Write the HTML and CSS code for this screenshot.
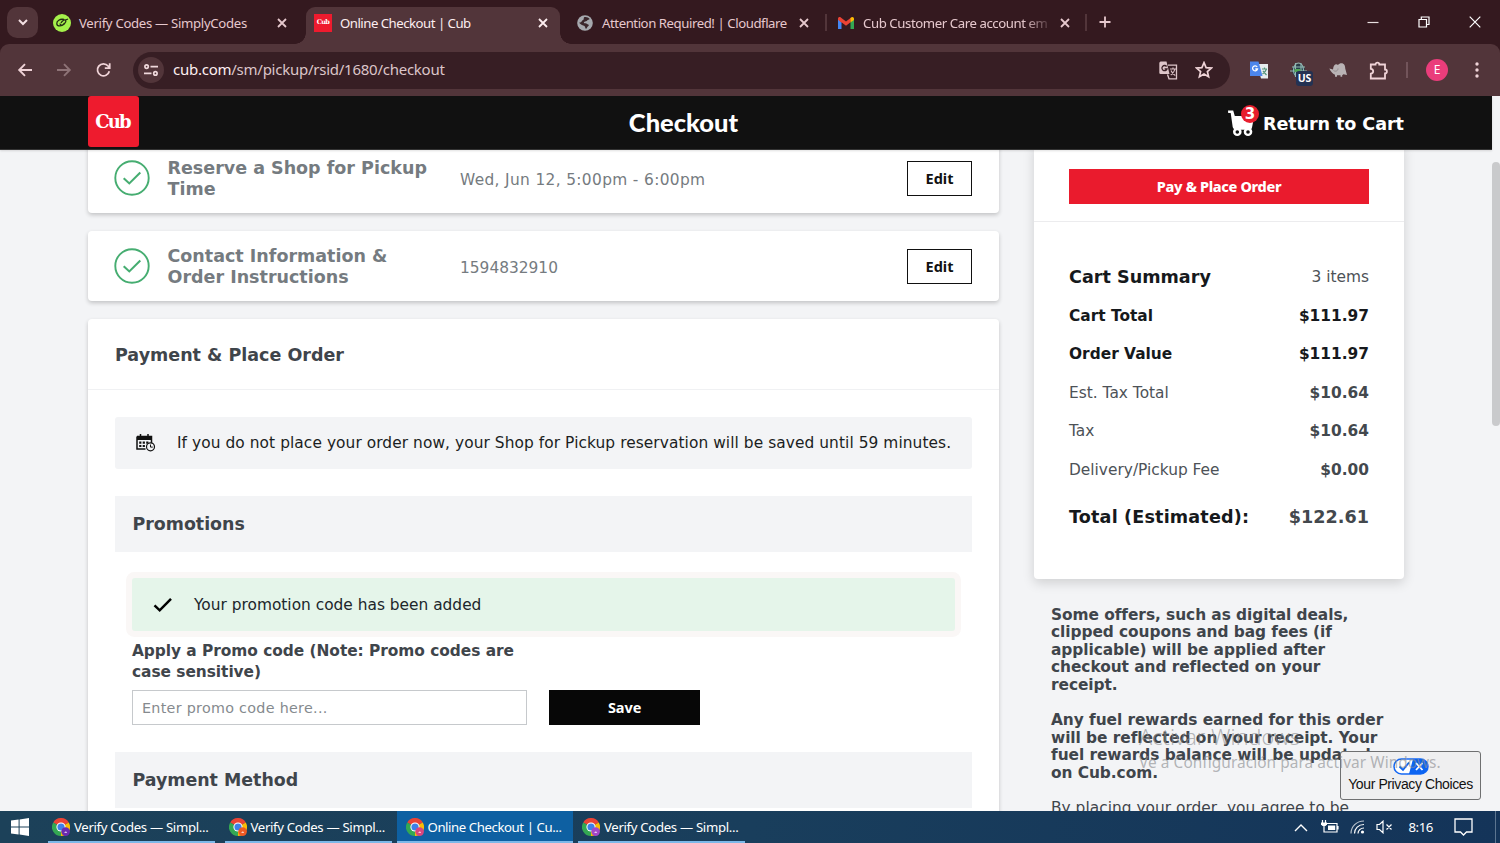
FILE: index.html
```html
<!DOCTYPE html>
<html lang="en">
<head>
    <meta charset="UTF-8">
    <meta name="viewport" content="width=device-width, initial-scale=1.0">
    <title>Online Checkout | Cub</title>
    <link rel="stylesheet" href="styles.css">
</head>
<body>
    <!-- shared icons -->
    <svg class="defs" width="0" height="0">
        <symbol id="close" viewBox="0 0 12 12"><path d="M2 2l8 8M10 2l-8 8" fill="none" stroke="currentColor" stroke-width="1.8"/></symbol>
        <symbol id="check-circle" viewBox="0 0 36 36">
            <circle cx="18" cy="18" r="16.7" fill="none" stroke="#46ad71" stroke-width="1.9"/>
            <path d="M9.7 18.2l5.6 5.2 11-10.8" fill="none" stroke="#46ad71" stroke-width="2.1"/>
        </symbol>
        <symbol id="chrome" viewBox="0 0 18 18">
            <path d="M9 9L1.2 4.5A9 9 0 0 1 16.8 4.5z" fill="#ea4335"/>
            <path d="M9 9l7.8-4.5A9 9 0 0 1 9 18z" fill="#fbbc05"/>
            <path d="M9 9v9A9 9 0 0 1 1.2 4.5z" fill="#34a853"/>
            <circle cx="9" cy="9" r="4.6" fill="#fff"/>
            <circle cx="9" cy="9" r="3.6" fill="#3f7fe8"/>
            <circle cx="13.6" cy="13.6" r="4.3" fill="currentColor"/>
            <path d="M12.4 15c0-2 2.6-2 2.6 0z" fill="#fff" opacity=".7"/>
        </symbol>
    </svg>

    <div class="tabstrip">
        <button class="tab-search"><svg width="12" height="12" viewBox="0 0 12 12"><path d="M2 4l4 4 4-4" fill="none" stroke="#f3dfe2" stroke-width="2"/></svg></button>
        <div class="tab tab-codes">
            <svg class="favicon" width="18" height="18" viewBox="0 0 18 18"><circle cx="9" cy="9" r="9" fill="#a5f14b"/><path d="M11 5.500C7 4.500 3.500 7 3.800 9.800c.4 3 5.500 3 7.700-.8M7 9.500c0 2.500 4 2 5.500-1.200.5-1.200.5-2-.3-2.300-1.300-.3-3.500 1.300-4.200 3M12.500 6l2.500-1" fill="none" stroke="#232c14" stroke-width="1.300"/></svg>
            <span class="tab-title">Verify Codes — SimplyCodes</span>
            <svg class="tab-close" width="12" height="12"><use href="#close"/></svg>
        </div>
        <div class="tab tab-cub active">
            <span class="favicon cub-favicon">Cub</span>
            <span class="tab-title">Online Checkout | Cub</span>
            <svg class="tab-close" width="12" height="12"><use href="#close"/></svg>
        </div>
        <div class="tab tab-cloudflare">
            <svg class="favicon" width="16" height="16" viewBox="0 0 16 16"><circle cx="8" cy="8" r="7.800" fill="#a6a9ae"/><path d="M7 2.200c2.500-.7 4.500.3 5.700 1.800-.8 1-2 .4-2.500 1.500-.6 1.200-1.800.7-2.700 1.200C6.200 7.500 7 8.300 8.500 8.200c1.300 0 1.500 1 2.800 1.200.9.300.5 1.600-.5 2-.8.500-.8 2.400-1.900 2.300-1-.2-.3-2-1.500-2.700-1.300-.7-3.400-1-5.600-3.500C3.200 8 4.500 7 5 6c.4-1 2-1 1.700-2.200z" fill="#3b272c"/></svg>
            <span class="tab-title">Attention Required! | Cloudflare</span>
            <svg class="tab-close" width="12" height="12"><use href="#close"/></svg>
        </div>
        <div class="tab tab-gmail">
            <svg class="favicon" width="16" height="12" viewBox="0 0 16 12"><path d="M0 2v10h3.500V5z" fill="#4285f4"/><path d="M16 2v10h-3.500V5z" fill="#34a853"/><path d="M0 1.800C0 .2 1.700-.4 2.800.5L8 4.500 13.200.5 12.500 5.300 8 8.700 3.500 5.300v.5L0 2.800z" fill="#ea4335"/><path d="M12.500 1l1-.7C14.700-.4 16 .5 16 1.800v1.200l-3.500 2.500z" fill="#fbbc04"/></svg>
            <span class="tab-title faded">Cub Customer Care account em</span>
            <svg class="tab-close" width="12" height="12"><use href="#close"/></svg>
        </div>
        <svg class="new-tab" width="12" height="12" viewBox="0 0 12 12"><path d="M6 .5v11M.5 6h11" stroke="#e6c8cd" stroke-width="1.800"/></svg>
        <div class="window-controls">
            <svg width="12" height="12" viewBox="0 0 12 12"><path d="M.5 6.500h11" stroke="#e9dfe0" stroke-width="1.200"/></svg>
            <svg width="12" height="12" viewBox="0 0 12 12"><path d="M1 3.500h7.500V11H1zM3.300 3.500V1H11v7.500H8.500" fill="none" stroke="#fff" stroke-width="1.200"/></svg>
            <svg width="12" height="12" viewBox="0 0 12 12"><path d="M.7.700l10.600 10.600M11.300.7L.7 11.300" stroke="#fff" stroke-width="1.200"/></svg>
        </div>
    </div>

    <div class="toolbar">
        <svg class="nav-icon" width="16" height="16" viewBox="0 0 16 16"><path d="M15 8H2.500M8 2.200L2.200 8 8 13.800" fill="none" stroke="#efd3d7" stroke-width="1.900"/></svg>
        <svg class="nav-icon" width="16" height="16" viewBox="0 0 16 16"><path d="M1 8h12.500M8 2.200L13.800 8 8 13.800" fill="none" stroke="#8e7377" stroke-width="1.900"/></svg>
        <svg class="nav-icon" width="16" height="16" viewBox="0 0 16 16"><path d="M14.300 9.200A6 6 0 1 1 13.100 4l1.400 1.600M14.700 1.200v4.900H9.800" fill="none" stroke="#efd3d7" stroke-width="1.800"/></svg>
        <div class="omnibox">
            <span class="site-info"><svg width="14" height="12" viewBox="0 0 14 12"><g fill="none" stroke="#efd9dc" stroke-width="1.700"><circle cx="2.600" cy="2.600" r="1.700"/><path d="M6.500 2.600H14M0 9.400h7.500"/><circle cx="11.400" cy="9.400" r="1.700"/></g></svg></span>
            <span class="url"><span class="domain">cub.com</span>/sm/pickup/rsid/1680/checkout</span>
            <svg class="translate" width="19" height="19" viewBox="0 0 19 19"><path d="M1.500.5h6l3 12.500h-9A1.300 1.300 0 0 1 .3 12V1.700z" fill="#ddc5c9"/><path d="M9 4.200h8.500v13.600H10L8.500 13.500" fill="none" stroke="#ddc5c9" stroke-width="1.300"/><path d="M11 8h6M14 6.500V8M16 8c-.7 3-2.200 4.500-4.200 6M12 9.500c1 2.500 2.500 4 4.300 5" fill="none" stroke="#ddc5c9" stroke-width="1.100"/><path d="M7.600 5.500A2.600 2.600 0 1 0 8 8H5.600" fill="none" stroke="#371e24" stroke-width="1.300"/></svg>
            <svg class="star" width="18" height="18" viewBox="0 0 18 18"><path d="M9 1.700l2.100 5 5.300.4-4 3.500 1.200 5.200L9 13l-4.600 2.800 1.200-5.200-4-3.500 5.300-.4z" fill="none" stroke="#efd3d7" stroke-width="1.700"/></svg>
        </div>
        <div class="extensions">
            <svg width="18" height="18" viewBox="0 0 18 18"><path d="M7 3h11v14.500h-7z" fill="#e6ecee"/><path d="M12 8h5M14.500 6.500v2M16.500 8c-1 3-2.500 4-4 5M13 10l3.500 4" fill="none" stroke="#55957c" stroke-width="1.200"/><path d="M0 .5h8.500L12.500 15H0z" fill="#4c86ec"/><path d="M7.200 6A2.500 2.500 0 1 0 7.500 8H5.300" fill="none" stroke="#fff" stroke-width="1.300"/></svg>
            <span class="globe">
                <svg width="17" height="17" viewBox="0 0 17 17"><circle cx="8.500" cy="8.500" r="6.500" fill="#263e4a"/><g fill="none" stroke="#91b7b2" stroke-width="1.100"><path d="M2 5h13M0 9h17M5.500 1v14M11 1v14"/><ellipse cx="8.500" cy="8" rx="5" ry="7"/></g><path d="M4.500 7h6v3h-6z" fill="#51a657"/></svg>
                <span class="globe-badge">US</span>
            </span>
            <svg width="18" height="16" viewBox="0 0 18 16"><path d="M.3 6.500L4 7.500C4.500 2.500 7 1.500 9 3c1.500-2 5-2.500 6.500 0 .8 1.500.5 3 1 4.500L18 13l-3.500-.8-1.300 1v1.600h-1.700v-1.500H8v1.500H6v-2C3.500 11.500 1.500 9.500.3 6.500z" fill="#b9b3b5"/><path d="M4.500 8.500c2 1.500 4.500.5 4.500-2" fill="none" stroke="#958d8f"/></svg>
            <svg width="19" height="19" viewBox="0 0 19 19"><path d="M1.800 3.500h4.700a1.900 1.900 0 0 1 3.800 0H16v5a1.900 1.900 0 0 1 0 3.800v5.200H1.800v-4.800c3.200-.3 3.200-4.600 0-4.900z" fill="none" stroke="#efd3d7" stroke-width="1.800"/></svg>
        </div>
        <span class="divider"></span>
        <span class="avatar">E</span>
        <svg class="menu-dots" width="4" height="16" viewBox="0 0 4 16"><g fill="#efd3d7"><circle cx="2" cy="2" r="1.700"/><circle cx="2" cy="8" r="1.700"/><circle cx="2" cy="14" r="1.700"/></g></svg>
    </div>

    <div class="viewport">
        <div class="page">
            <header class="site-header">
                <div class="logo">Cub</div>
                <h1>Checkout</h1>
                <a class="return-cart">
                    <span class="cart-icon">
                        <svg width="27" height="27" viewBox="0 0 27 27"><path d="M0 .5h5.200l1.600 5.500H26.300L24 17.500c-.3 1.200-.8 2-1.500 2.300H8.300C6.500 19.800 5 18.500 4.700 17L2.700 3H.2z" fill="#fff"/><circle cx="9.300" cy="21.700" r="4.300" fill="#fff"/><circle cx="20" cy="21.700" r="4.300" fill="#fff"/><circle cx="9.300" cy="22" r="1.800" fill="#111"/><circle cx="20" cy="22" r="1.800" fill="#111"/></svg>
                        <span class="cart-count">3</span>
                    </span>
                    <span class="return-label">Return to Cart</span>
                </a>
            </header>

            <div class="content">
                <main class="steps">
                    <section class="card step">
                        <svg width="36" height="36"><use href="#check-circle"/></svg>
                        <h2>Reserve a Shop for Pickup<br>Time</h2>
                        <span class="step-value step-date">Wed, Jun 12, 5:00pm - 6:00pm</span>
                        <button class="edit-btn">Edit</button>
                    </section>
                    <section class="card step">
                        <svg width="36" height="36"><use href="#check-circle"/></svg>
                        <h2>Contact Information &amp;<br>Order Instructions</h2>
                        <span class="step-value">1594832910</span>
                        <button class="edit-btn">Edit</button>
                    </section>
                    <section class="card payment">
                        <h2 class="payment-title">Payment &amp; Place Order</h2>
                        <div class="payment-body">
                            <div class="notice">
                                <svg width="20" height="18" viewBox="0 0 20 18"><path d="M1 2.500h14.500v7M1 2.500V15h8.500M4.500 0v4M12 0v4" fill="none" stroke="#111" stroke-width="1.500"/><path d="M1 3h14.500v3H1z" fill="#111"/><path d="M3.200 8.700h9.500M3.200 12h6" stroke="#111" stroke-width="2.200" stroke-dasharray="2.200 1.300"/><circle cx="14.500" cy="12.800" r="4" fill="#f3f4f6" stroke="#111" stroke-width="1.200"/><path d="M14.500 10.500v2.600h2.300" fill="none" stroke="#111"/></svg>
                                <span>If you do not place your order now, your Shop for Pickup reservation will be saved until 59 minutes.</span>
                            </div>
                            <h3 class="section-title">Promotions</h3>
                            <div class="promo">
                                <div class="success">
                                    <svg width="20" height="16" viewBox="0 0 20 16"><path d="M1.500 8.300l5.200 5L18 1.800" fill="none" stroke="#000" stroke-width="2.500"/></svg>
                                    <span>Your promotion code has been added</span>
                                </div>
                                <label class="promo-label" for="promo">Apply a Promo code (Note: Promo codes are<br>case sensitive)</label>
                                <div class="promo-form">
                                    <input id="promo" type="text" placeholder="Enter promo code here...">
                                    <button class="save-btn">Save</button>
                                </div>
                            </div>
                            <h3 class="section-title">Payment Method</h3>
                        </div>
                    </section>
                </main>

                <aside class="sidebar">
                    <div class="card summary">
                        <div class="pay-wrap"><button class="pay-btn">Pay &amp; Place Order</button></div>
                        <div class="summary-rows">
                            <div class="row heading"><span>Cart Summary</span><span class="items">3 items</span></div>
                            <div class="row strong"><span>Cart Total</span><b>$111.97</b></div>
                            <div class="row strong"><span>Order Value</span><b>$111.97</b></div>
                            <div class="row"><span>Est. Tax Total</span><b>$10.64</b></div>
                            <div class="row"><span>Tax</span><b>$10.64</b></div>
                            <div class="row"><span>Delivery/Pickup Fee</span><b>$0.00</b></div>
                            <div class="row total"><span>Total (Estimated):</span><b>$122.61</b></div>
                        </div>
                    </div>
                    <div class="disclaimer">
                        <p class="bold">Some offers, such as digital deals,<br>clipped coupons and bag fees (if<br>applicable) will be applied after<br>checkout and reflected on your<br>receipt.</p>
                        <p class="bold">Any fuel rewards earned for this order<br>will be reflected on your receipt. Your<br>fuel rewards balance will be updated<br>on Cub.com.</p>
                        <p class="agreement">By placing your order, you agree to be</p>
                    </div>
                </aside>
            </div>
        </div>
        <div class="scrollbar"><div class="thumb"></div></div>

        <button class="privacy">
            <svg width="36" height="17" viewBox="0 0 36 17"><rect x="1" y="1" width="34" height="15" rx="7.500" fill="#fff" stroke="#1668f3" stroke-width="1.500"/><path d="M20 1h7.500a7.500 7.500 0 0 1 0 15H16z" fill="#0c64f2"/><path d="M6.500 8.500l3.500 3.500 6-7.500" fill="none" stroke="#0c64f2" stroke-width="1.800"/><path d="M23 5l6.500 7M29.500 5L23 12" stroke="#fff" stroke-width="1.800"/></svg>
            <span>Your Privacy Choices</span>
        </button>
        <div class="watermark">
            <div class="watermark-title">Activar Windows</div>
            <div class="watermark-text">Ve a Configuración para activar Windows.</div>
        </div>
    </div>

    <div class="taskbar">
        <svg class="start" width="18" height="18" viewBox="0 0 18 18"><path d="M0 2.600L7.600 1.500v7H0zM8.600 1.400L18 0v8.500H8.600zM0 9.500h7.600v7L0 15.400zM8.600 9.500H18V18l-9.400-1.400z" fill="#fff"/></svg>
        <div class="tasks">
            <div class="task"><svg class="violet" width="18" height="18"><use href="#chrome"/></svg><span>Verify Codes — Simpl...</span></div>
            <div class="task"><svg class="orange" width="18" height="18"><use href="#chrome"/></svg><span>Verify Codes — Simpl...</span></div>
            <div class="task current"><svg class="pink" width="18" height="18"><use href="#chrome"/></svg><span>Online Checkout | Cu...</span></div>
            <div class="task"><svg class="purple" width="18" height="18"><use href="#chrome"/></svg><span>Verify Codes — Simpl...</span></div>
        </div>
        <div class="tray">
            <svg width="14" height="9" viewBox="0 0 14 9"><path d="M1 8l6-6 6 6" fill="none" stroke="#fff" stroke-width="1.400"/></svg>
            <svg width="18" height="14" viewBox="0 0 18 14"><path d="M5 3.500h11v8.500H5M17 6v3.500" fill="none" stroke="#fff" stroke-width="1.200"/><path d="M7 5.500h7.200V10H7z" fill="#fff"/><path d="M1.500 0v3M4.500 0v3M3 5v7H5" fill="none" stroke="#fff" stroke-width="1.200"/><path d="M0 2.500h6V4.500L4.500 6h-3L0 4.500z" fill="#fff"/></svg>
            <svg width="15" height="14" viewBox="0 0 15 14"><g fill="none" stroke="#fff" stroke-width="1.200"><path d="M1 13.500C1 6.500 6.500 1 14 1" opacity=".7"/><path d="M4.500 13.500C4.500 8.500 8.500 4.500 14 4.500M8 13.500C8 10.500 10.500 8 14 8"/></g><circle cx="12.500" cy="12" r="1.600" fill="#fff"/></svg>
            <svg width="17" height="14" viewBox="0 0 17 14"><path d="M1 4.500h2.500L7 1.200v11.600L3.500 9.500H1zM10.500 4.500l5 5M15.500 4.500l-5 5" fill="none" stroke="#fff" stroke-width="1.200"/></svg>
            <span class="clock">8:16</span>
            <svg width="19" height="18" viewBox="0 0 19 18"><path d="M1 1h17v13h-5.500L9.500 17l-3-3H1z" fill="none" stroke="#fff" stroke-width="1.300"/></svg>
        </div>
    </div>
</body>
</html>
```
FILE: styles.css
```css
* {
    box-sizing: border-box;
}

body {
    margin: 0;
    width: 1500px;
    height: 843px;
    overflow: hidden;
    display: flex;
    flex-direction: column;
    font-family: Verdana, "DejaVu Sans", sans-serif;
    font-size: 15.4px;
    color: #3f454b;
    background: #34191f;
}

h1, h2, h3, p {
    margin: 0;
}

button {
    padding: 0 0 1px;
    border: none;
    font-family: "Noto Sans", sans-serif;
}

svg {
    flex: none;
    display: block;
}

span, b, label {
    white-space: nowrap;
}

.defs {
    position: absolute;
}

/* browser tabs */
.tabstrip {
    flex: none;
    height: 44px;
    display: flex;
    align-items: center;
    color: #e6c8cd;
    font-family: "Noto Sans", sans-serif;
    font-size: 13.2px;
}

.tab-search {
    width: 31px;
    height: 31px;
    margin-left: 7px;
    padding: 0;
    border-radius: 10px;
    background: #52353a;
    display: flex;
    align-items: center;
    justify-content: center;
}

.tab {
    height: 37px;
    margin-top: 7px;
    padding-bottom: 6px;
    display: flex;
    align-items: center;
    position: relative;
}

.tab-title {
    flex: 1;
    margin-left: 8px;
    letter-spacing: -0.4px;
}

.tab-codes { width: 268px; padding-left: 15px; padding-right: 18px; }
.tab-codes .tab-title { letter-spacing: -0.32px; }
.tab-cub { width: 254px; padding-left: 8px; padding-right: 11px; }
.tab-cub .tab-title { letter-spacing: -0.5px; }
.tab-cloudflare { width: 266px; padding-left: 17px; padding-right: 16px; }
.tab-cloudflare .tab-title { margin-left: 9px; letter-spacing: -0.44px; }
.tab-gmail { width: 261px; padding-left: 12px; padding-right: 16px; }
.tab-gmail .tab-title { margin-left: 9px; letter-spacing: -0.42px; }

.tab.active {
    background: #52353a;
    color: #fdeef0;
    border-radius: 9px 9px 0 0;
}

/* flared feet of the selected tab */
.tab.active::before,
.tab.active::after {
    content: "";
    position: absolute;
    bottom: 0;
    width: 11px;
    height: 11px;
}

.tab.active::before {
    left: -11px;
    background: radial-gradient(circle at 0 0, transparent 10.5px, #52353a 11px);
}

.tab.active::after {
    right: -11px;
    background: radial-gradient(circle at 100% 0, transparent 10.5px, #52353a 11px);
}

.tab-gmail::before,
.tab-gmail::after {
    content: "";
    position: absolute;
    top: 7px;
    width: 2px;
    height: 17px;
    background: #52353a;
}

.tab-gmail::before { left: -1px; }
.tab-gmail::after { right: 0; }

.faded {
    margin-right: 10px;
    mask-image: linear-gradient(90deg, #000 86%, rgba(0,0,0,0.15));
}

.cub-favicon {
    width: 18px;
    height: 18px;
    background: #ee1b2e;
    color: #fff;
    font: bold 6.5px/17px "DejaVu Serif", serif;
    letter-spacing: -0.6px;
    text-align: center;
}

.new-tab {
    margin-left: 12px;
}

.window-controls {
    display: flex;
    gap: 39px;
    margin-left: auto;
    margin-right: 19px;
}

/* browser toolbar */
.toolbar {
    flex: none;
    height: 52px;
    display: flex;
    align-items: center;
    padding-left: 17px;
    background: #52353a;
    border-radius: 9px 9px 0 0;
    font-family: "Noto Sans", sans-serif;
}

.nav-icon {
    margin-right: 23px;
}

.omnibox {
    width: 1097px;
    height: 37px;
    margin-left: -1px;
    padding: 0 17px 0 5px;
    display: flex;
    align-items: center;
    border-radius: 19px;
    background: #371e24;
}

.site-info {
    width: 26px;
    height: 26px;
    border-radius: 50%;
    background: #52353a;
    display: flex;
    align-items: center;
    justify-content: center;
}

.url {
    flex: 1;
    margin-left: 9px;
    padding-bottom: 2px;
    color: #dcc5c9;
    font-size: 15px;
    letter-spacing: -0.25px;
}

.domain {
    color: #fdeef0;
}

.star {
    margin-left: 17px;
}

.extensions {
    display: flex;
    align-items: center;
    gap: 22px;
    margin-left: 20px;
}

.globe {
    position: relative;
}

.globe-badge {
    position: absolute;
    left: 6px;
    top: 9px;
    width: 17px;
    height: 15px;
    border-radius: 3px;
    background: #233253;
    color: #fff;
    font: bold 10.5px/15px "Open Sans", sans-serif;
    text-align: center;
}

.divider {
    width: 2px;
    height: 16px;
    margin-left: 18px;
    background: #72545a;
}

.avatar {
    width: 22px;
    height: 22px;
    margin-left: 18px;
    border-radius: 50%;
    background: #ea3d7b;
    color: #fff;
    font-size: 12px;
    line-height: 22px;
    text-align: center;
}

.menu-dots {
    margin-left: 27px;
}

/* page */
.viewport {
    flex: none;
    height: 715px;
    display: flex;
    position: relative;
    overflow: hidden;
    background: #f3f4f6;
}

.page {
    width: 1492px;
}

.site-header {
    height: 54px;
    padding: 0 88px;
    display: grid;
    grid-template-columns: 51px 1fr 176px;
    background: #111;
    color: #fff;
    border-bottom: 1px solid #333;
    position: relative;
    z-index: 1;
    box-shadow: 0 1px 2px rgba(0,0,0,0.12);
}

.logo {
    height: 51px;
    border-radius: 3px;
    background: #ee1b2e;
    font: bold 18px/51px "DejaVu Serif", serif;
    letter-spacing: -1.9px;
    text-indent: -2px;
    text-align: center;
}

.site-header h1 {
    font: 900 25.5px/52px Lato, sans-serif;
    text-align: center;
}

.return-cart {
    display: flex;
    align-items: center;
    font-size: 17.6px;
    font-weight: bold;
}

.return-label {
    padding-top: 2px;
    letter-spacing: -0.1px;
}

.cart-icon {
    position: relative;
    width: 35px;
    padding-top: 1px;
}

.cart-count {
    position: absolute;
    left: 13px;
    top: -4px;
    width: 18px;
    height: 18px;
    border-radius: 50%;
    background: #e81d2d;
    font-size: 15px;
    line-height: 18px;
    text-align: center;
}

.content {
    display: flex;
    align-items: flex-start;
    gap: 35px;
    padding: 0 88px;
    margin-top: -7px;
}

.steps {
    width: 911px;
    display: flex;
    flex-direction: column;
    gap: 18px;
}

.card {
    background: #fff;
    border-radius: 4px;
    box-shadow: 0 2px 4px rgba(0,0,0,0.2);
}

.card h2 {
    font-size: 17.5px;
    line-height: 21px;
}

.step {
    height: 70px;
    padding: 0 27px 0 26px;
    display: flex;
    align-items: center;
    color: #757b80;
}

.step h2 {
    width: 292.5px;
    margin-left: 17.5px;
    padding-top: 2px;
}

.step-value {
    flex: 1;
    margin-top: 3px;
}

.step-date {
    letter-spacing: 0.35px;
}

.edit-btn {
    width: 65px;
    height: 35px;
    border: 1px solid #111;
    background: #fff;
    color: #111;
    font-size: 14.5px;
    font-weight: 700;
}

.payment-title {
    height: 71px;
    padding: 26px 27px 0;
    border-bottom: 1px solid #f0f1f3;
}

.payment-body {
    padding: 27px;
    height: 500px;
}

.notice {
    height: 52px;
    padding-left: 21px;
    display: flex;
    align-items: center;
    gap: 21px;
    border-radius: 3px;
    background: #f3f4f6;
    color: #1b1e22;
    letter-spacing: 0.07px;
}

.section-title {
    height: 56px;
    margin-top: 27px;
    padding-left: 17.5px;
    background: #f3f4f6;
    font-size: 17.4px;
    line-height: 57px;
}

.promo {
    padding: 26px 17px 0;
}

.success {
    height: 53px;
    padding-left: 21px;
    display: flex;
    align-items: center;
    gap: 21px;
    border-radius: 3px;
    background: #e5f5ea;
    box-shadow: 0 0 0 6px #faf7f6;
    color: #20262a;
}

.promo-label {
    display: block;
    margin-top: 10px;
    font-weight: bold;
    line-height: 21px;
    letter-spacing: -0.04px;
}

.promo-form {
    display: flex;
    gap: 22px;
    margin-top: 7px;
}

.promo-form input {
    width: 395.4px;
    height: 35px;
    padding: 0 9px;
    border: 1px solid #c6c9cc;
    font-family: Verdana, "DejaVu Sans", sans-serif;
    font-size: 14.3px;
    letter-spacing: 0.3px;
}

.promo-form input::placeholder {
    color: #858a8e;
}

.save-btn {
    width: 150.6px;
    height: 35px;
    background: #070707;
    color: #fff;
    font-size: 14.5px;
    font-weight: 700;
}

/* order summary */
.sidebar {
    width: 370px;
}

.summary {
    height: 436px;
    box-shadow: 0 4px 12px rgba(0,0,0,0.15);
}

.pay-wrap {
    height: 79px;
    padding: 25.5px 35px 0;
    border-bottom: 1px solid #ececee;
}

.pay-btn {
    width: 300px;
    height: 35px;
    background: #ea1b2d;
    color: #fff;
    font-size: 14.5px;
    font-weight: 800;
    letter-spacing: -0.35px;
}

.summary-rows {
    padding: 36px 35px 0;
}

.row {
    height: 38.5px;
    display: flex;
    align-items: center;
    justify-content: space-between;
    color: #4d5257;
}

.row b {
    color: #43484d;
}

.row.heading,
.row.total {
    font-size: 17.6px;
    font-weight: bold;
    color: #16191c;
}

.row.total {
    height: 56px;
}

.row.total span {
    letter-spacing: 0.15px;
}

.row .items {
    font-size: 15.4px;
    font-weight: normal;
    color: #4d5257;
}

.row.strong,
.row.strong b {
    font-weight: bold;
    color: #16191c;
}

.disclaimer {
    padding: 27.5px 0 0 17px;
    line-height: 17.6px;
    letter-spacing: -0.06px;
    white-space: nowrap;
}

.disclaimer p {
    margin-bottom: 17.6px;
}

.disclaimer .agreement {
    letter-spacing: 0.02px;
}

.bold {
    font-weight: bold;
}

.scrollbar {
    width: 8px;
    padding-top: 66px;
    background: #f3f4f6;
}

.thumb {
    width: 8px;
    height: 264px;
    border-radius: 4px;
    background: #c9cacc;
}

.privacy {
    position: absolute;
    left: 1340px;
    top: 655px;
    width: 141px;
    height: 49px;
    padding: 0 0 1px;
    display: flex;
    flex-direction: column;
    align-items: center;
    justify-content: center;
    border: 1px solid #6f7071;
    border-radius: 3px;
    background: #efeff0;
    color: #111;
    font: 14px/18px "Liberation Sans", Arial, sans-serif;
    letter-spacing: -0.4px;
}

/* activation notice over the desktop */
.watermark {
    position: absolute;
    left: 1139px;
    top: 627px;
    color: rgba(140,142,146,0.65);
    font-family: "Noto Sans", sans-serif;
    white-space: nowrap;
}

.watermark-title {
    font-size: 21.5px;
    font-weight: 300;
    line-height: 28px;
    letter-spacing: 0.1px;
}

.watermark-text {
    font-size: 15.4px;
    line-height: 23px;
    letter-spacing: 0.07px;
}

/* windows taskbar */
.taskbar {
    flex: none;
    height: 32px;
    display: flex;
    align-items: center;
    background: linear-gradient(90deg, #1c4159, #193e5c 50%, #143459);
    color: #fff;
    font-family: "Noto Sans", sans-serif;
    font-size: 13.2px;
}

.start {
    margin-left: 11px;
}

.tasks {
    display: flex;
    gap: 9.5px;
    margin-left: 19px;
    height: 32px;
}

.task {
    width: 167px;
    padding-left: 4px;
    padding-top: 1px;
    display: flex;
    align-items: center;
    gap: 4px;
    border-bottom: 2px solid #7cb8e8;
    letter-spacing: -0.33px;
}

.task.current {
    width: 175.5px;
    margin: 0 -4px;
    padding-left: 8.5px;
    background: #0e60a2;
}

.task.current span {
    letter-spacing: -0.42px;
}

.violet { color: #6b2bb0; }
.orange { color: #ee5a24; }
.pink { color: #d9457e; }
.purple { color: #a347c8; }

.tray {
    display: flex;
    align-items: center;
    gap: 11px;
    margin-left: auto;
    padding-right: 22px;
    border-right: 1px solid #5c7590;
    margin-right: 4px;
    height: 32px;
}

.tray svg:first-child {
    margin-right: 2px;
}

.clock {
    margin: 0 10px 0 4px;
    letter-spacing: -0.4px;
}
```
